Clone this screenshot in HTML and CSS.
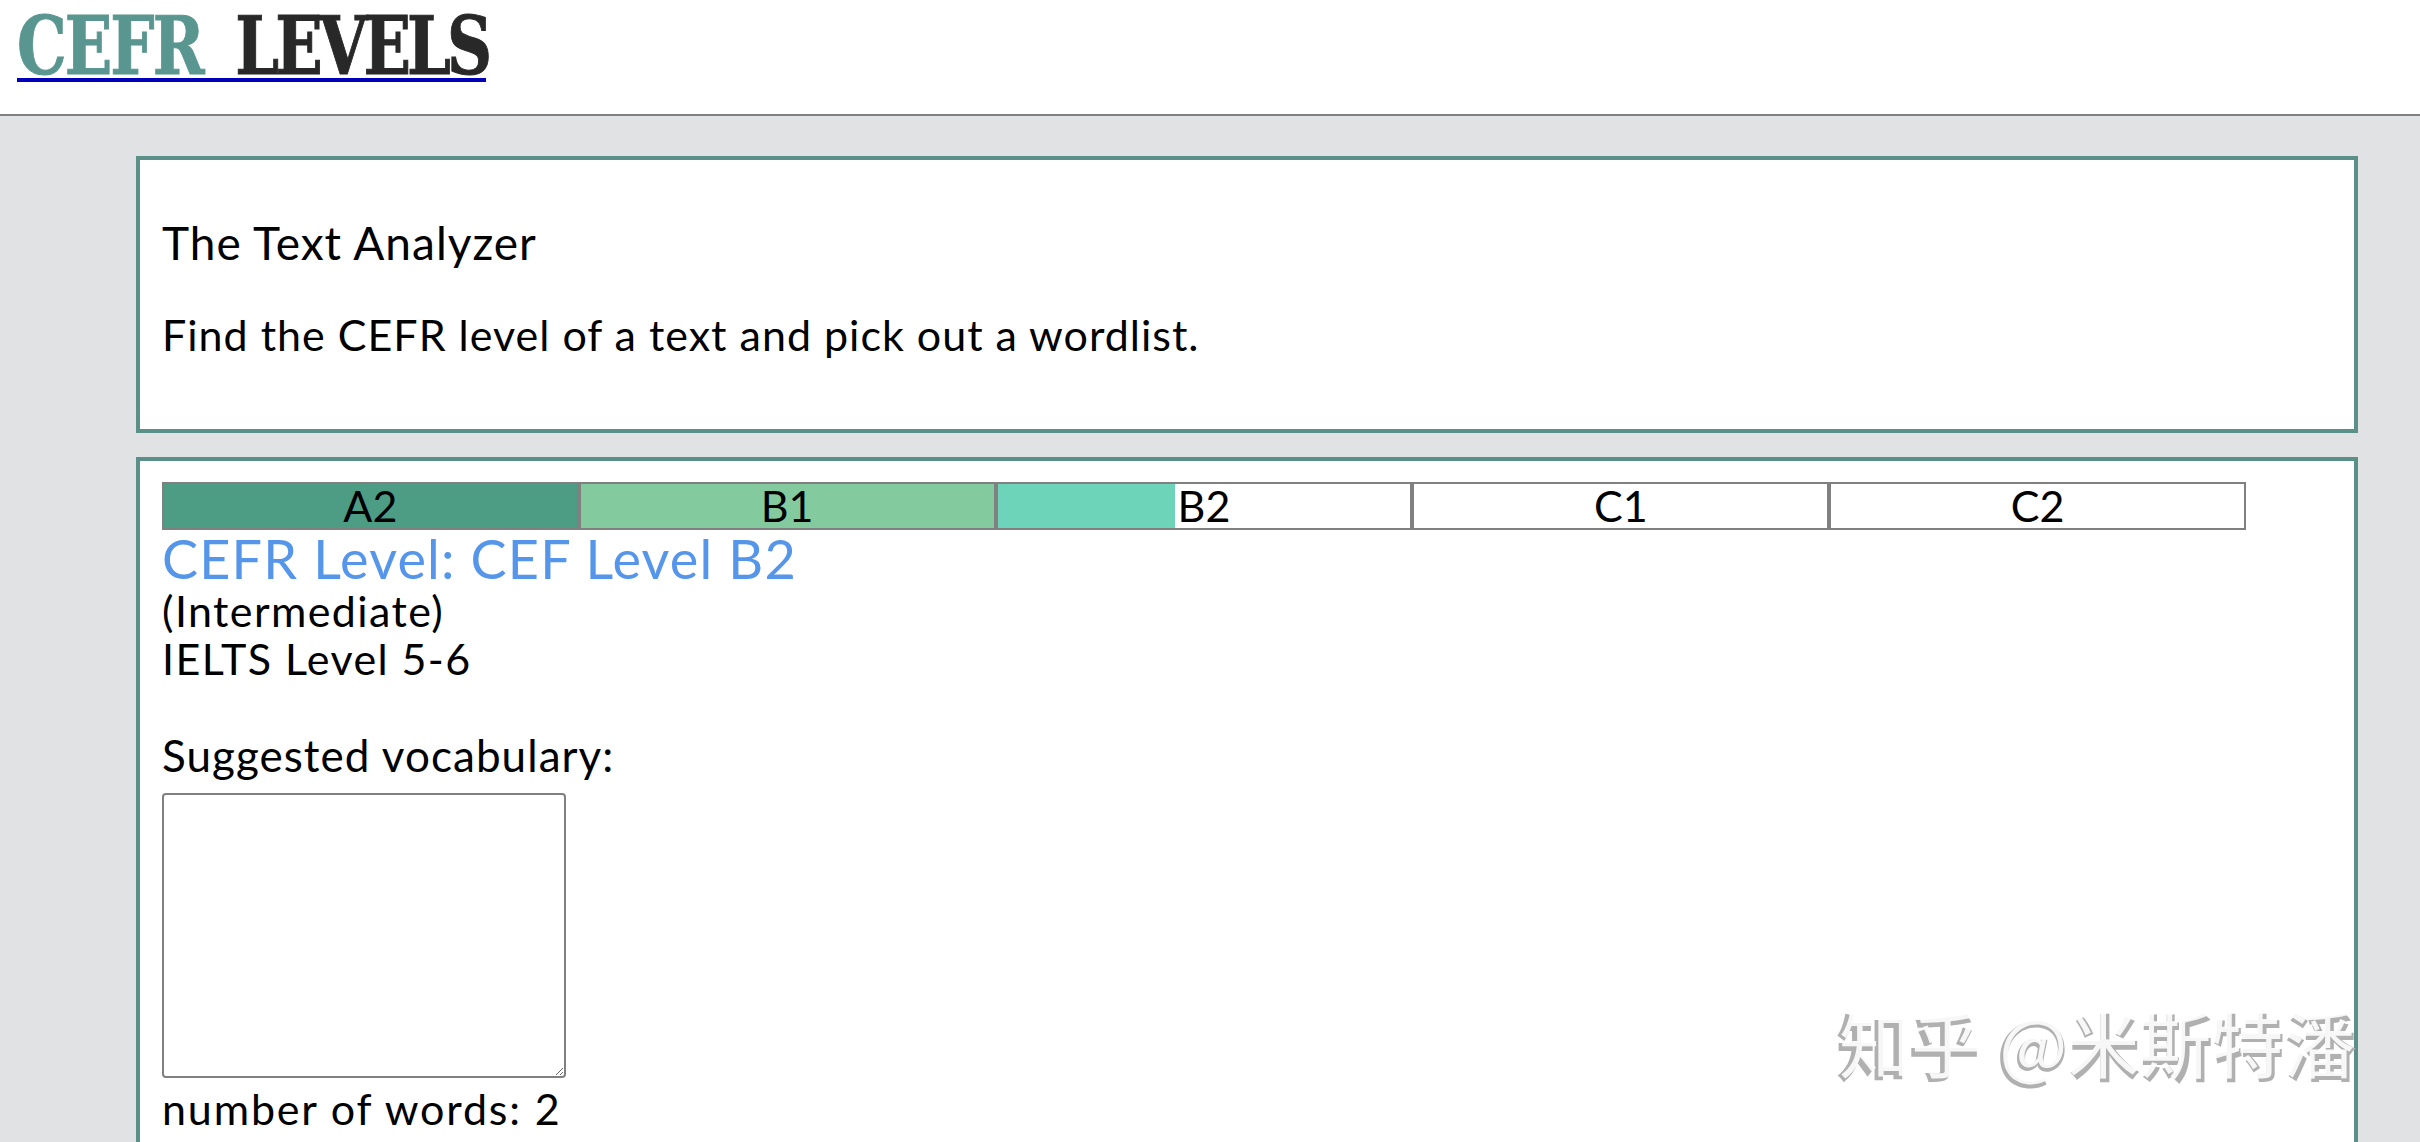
FILE: index.html
```html
<!DOCTYPE html>
<html lang="en">
<head>
  <meta charset="UTF-8" />
  <title>CEFR Levels - The Text Analyzer</title>
  <link rel="stylesheet" href="styles.css">
</head>
<body>

<header class="site-header">
  <a class="logo" href="#"><span class="logo-inner"><span class="logo-green">CEFR</span> <span class="logo-dark">LEVELS</span></span></a>
</header>

<main class="content">
  <section class="card intro">
    <h3>The Text Analyzer</h3>
    <p>Find the CEFR level of a text and pick out a wordlist.</p>
  </section>

  <section class="card result">
    <div class="level-bar">
      <div class="level a2">A2</div>
      <div class="level b1">B1</div>
      <div class="level b2"><span class="b2-fill"></span><span class="b2-label">B2</span></div>
      <div class="level">C1</div>
      <div class="level">C2</div>
    </div>
    <div class="level-title">CEFR Level: CEF Level B2</div>
    <div class="level-text">(Intermediate)<br>IELTS Level 5-6<br><br><span class="vocab-label">Suggested vocabulary:</span></div>
    <textarea class="vocab"></textarea>
    <div class="level-text word-count">number of words: 2</div>
  </section>
</main>

<div class="watermark" data-text="知乎 @米斯特潘">知乎 @米斯特潘</div>

</body>
</html>
```

FILE: styles.css
```css
html, body {
  height: 100%;
}
body {
  margin: 0;
  overflow: hidden;
  background: #e0e2e4;
  font-family: Lato, sans-serif;
  color: #000;
  position: relative;
}
.site-header {
  height: 114px;
  background: #fff;
  border-bottom: 2px solid #808080;
  padding-left: 17px;
}
.logo {
  display: block;
  width: 469px;
  height: 78px;
  border-bottom: 4px solid #0000b8;
  font-family: "DejaVu Serif", serif;
  font-weight: bold;
  font-size: 80px;
  line-height: 92px;
  text-decoration: none;
  white-space: nowrap;
  -webkit-text-stroke: 1px currentColor;
}
/* the logo face is much narrower than DejaVu Serif Bold */
.logo-inner {
  display: inline-block;
  transform: scaleX(0.78);
  transform-origin: left top;
  word-spacing: 14px;
}
.logo-green { color: #5a9690; letter-spacing: -2.5px; }
.logo-dark { color: #282828; letter-spacing: -5px; }

.content {
  padding: 40px 62px 0 136px;
}
.card {
  background: #fff;
  border: 4px solid #5a9088;
  padding: 0 22px;
  margin-bottom: 24px;
}
.intro {
  height: 269px;
}
.intro h3 {
  margin: 0;
  padding-top: 55px;
  font-size: 46px;
  line-height: 56px;
  font-weight: normal;
  letter-spacing: 1px;
}
.intro p {
  margin: 36px 0 0;
  font-size: 43px;
  line-height: 56px;
  letter-spacing: 1px;
}
.result {
  padding-top: 21px;
  height: 800px;
}
.level-bar {
  display: flex;
  width: 2084px;
  height: 48px;
}
.level {
  flex: 1;
  box-sizing: border-box;
  border: 2px solid #808080;
  font-size: 43px;
  line-height: 44px;
  text-align: center;
  position: relative;
}
.a2 { background: #4d9d85; }
.b1 { background: #83cb9e; }
.b2-fill {
  position: absolute;
  left: 0;
  top: 0;
  bottom: 0;
  width: 43%;
  background: #6dd3b9;
}
.b2-label { position: relative; }
.level-title {
  font-size: 54px;
  line-height: 57px;
  letter-spacing: 1.15px;
  color: #5596ea;
}
.level-text {
  font-size: 43px;
  line-height: 48px;
  letter-spacing: 1.4px;
}
.vocab-label {
  font-size: 44px;
  letter-spacing: 1.05px;
}
.vocab {
  display: block;
  box-sizing: border-box;
  width: 404px;
  height: 285px;
  margin: 13px 0 0;
  border: 2px solid #808080;
  border-radius: 4px;
  background: #fff;
}
.word-count {
  margin-top: 7px;
  letter-spacing: 1.85px;
}
.watermark {
  position: absolute;
  left: 1836px;
  top: 1000px;
  font-family: "Noto Sans CJK SC", sans-serif;
  font-size: 72px;
  font-weight: 700;
  line-height: 88px;
  color: #b0b0b0;
  white-space: nowrap;
}
.watermark::after {
  content: attr(data-text);
  position: absolute;
  left: 3px;
  top: -3px;
  font-weight: 400;
  color: #fff;
  opacity: 0.9;
}
```
